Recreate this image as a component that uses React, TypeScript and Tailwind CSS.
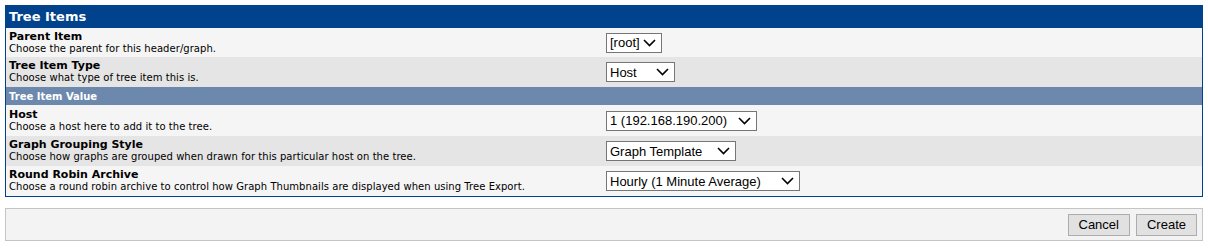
import React from "react";

const Chevron = () => (
  <svg width="13" height="8" viewBox="0 0 13 8" className="shrink-0">
    <path d="M1 1 L6.5 6.5 L12 1" fill="none" stroke="#000" strokeWidth="1.6" />
  </svg>
);

function Sel({ text, w }: { text: string; w: number }) {
  return (
    <div
      className="flex items-center justify-between border border-[#767676] bg-white h-[20px] pl-[3px] pr-[5px] text-[13px] text-black"
      style={{ width: w, fontFamily: '"Liberation Sans", Arial, sans-serif' }}
    >
      <span className="leading-none">{text}</span>
      <Chevron />
    </div>
  );
}

function Row({
  title,
  desc,
  bg,
  h,
  sel,
}: {
  title: string;
  desc: string;
  bg: string;
  h: number;
  sel: React.ReactNode;
}) {
  return (
    <div className={`flex items-center ${bg}`} style={{ height: h }}>
      <div className="w-1/2 pl-[3px]">
        <div className="font-bold text-[11px] leading-[12px]">{title}</div>
        <div className="text-[10px] leading-[12px] tracking-[0.05px]">{desc}</div>
      </div>
      <div className="w-1/2 pl-[2px]">{sel}</div>
    </div>
  );
}

export default function App() {
  return (
    <div
      className="w-[1208px] h-[250px] bg-white pt-[5px] pl-[5px] text-black"
      style={{ fontFamily: '"DejaVu Sans", Verdana, sans-serif' }}
    >
      <div className="w-[1198px] border border-[#00438c]">
        <div className="bg-[#00438c] h-[22px] flex items-center pl-[3px] text-white font-bold text-[13px]">
          Tree Items
        </div>
        <Row
          title="Parent Item"
          desc="Choose the parent for this header/graph."
          bg="bg-[#f5f5f5]"
          h={29}
          sel={<Sel text="[root]" w={56} />}
        />
        <Row
          title="Tree Item Type"
          desc="Choose what type of tree item this is."
          bg="bg-[#e5e5e5]"
          h={30}
          sel={<Sel text="Host" w={69} />}
        />
        <div className="bg-[#6d88ad] h-[18px] flex items-center pl-[3px] text-white font-bold text-[10px]">
          Tree Item Value
        </div>
        <Row
          title="Host"
          desc="Choose a host here to add it to the tree."
          bg="bg-[#f5f5f5]"
          h={31}
          sel={<Sel text="1 (192.168.190.200)" w={151} />}
        />
        <Row
          title="Graph Grouping Style"
          desc="Choose how graphs are grouped when drawn for this particular host on the tree."
          bg="bg-[#e5e5e5]"
          h={30}
          sel={<Sel text="Graph Template" w={130} />}
        />
        <Row
          title="Round Robin Archive"
          desc="Choose a round robin archive to control how Graph Thumbnails are displayed when using Tree Export."
          bg="bg-[#f5f5f5]"
          h={30}
          sel={<Sel text="Hourly (1 Minute Average)" w={194} />}
        />
      </div>
      <div className="mt-[11px] w-[1198px] h-[33px] border border-[#c4c4c4] bg-[#f3f3f3] flex items-center justify-end gap-[6px] pr-[5px]">
        {["Cancel", "Create"].map((t) => (
          <div
            key={t}
            className="h-[22px] px-[10px] flex items-center border border-[#adadad] bg-[#e1e1e1] text-[13px] text-black"
            style={{ fontFamily: '"Liberation Sans", Arial, sans-serif' }}
          >
            {t}
          </div>
        ))}
      </div>
    </div>
  );
}
